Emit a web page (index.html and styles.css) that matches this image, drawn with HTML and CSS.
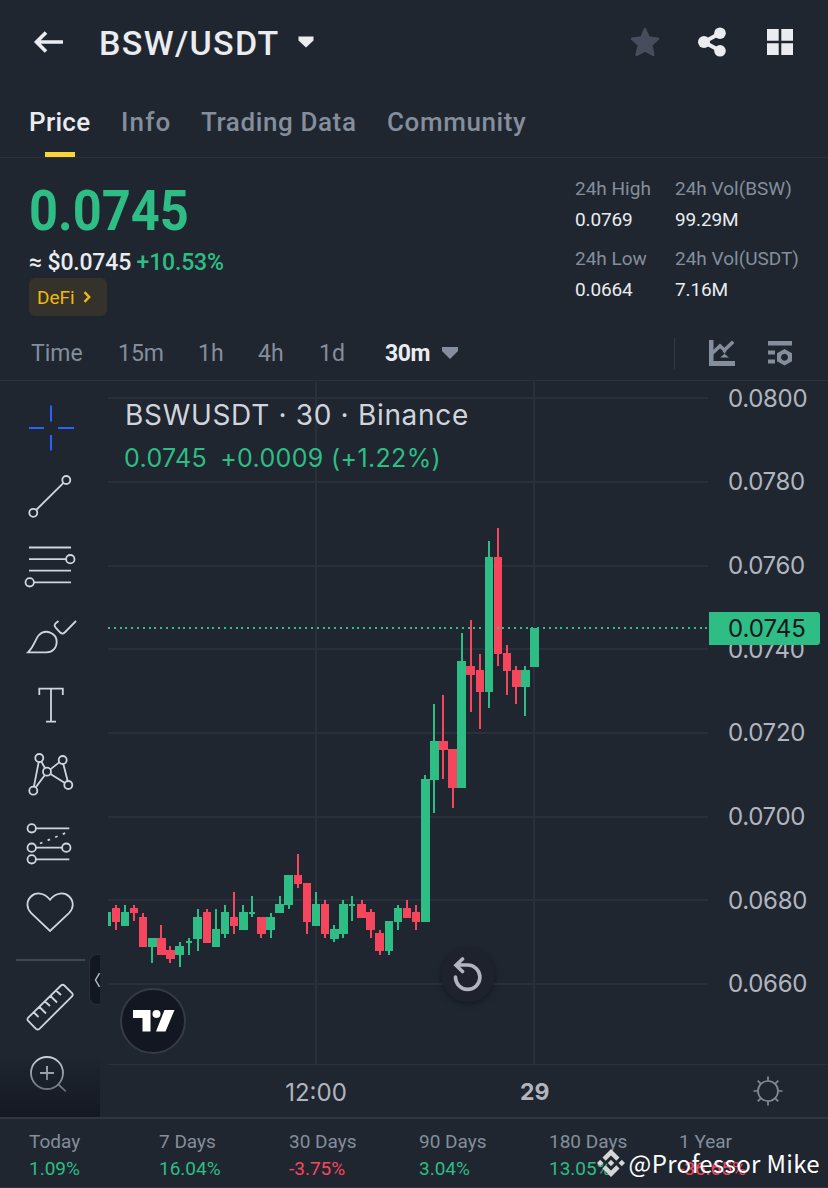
FILE: index.html
```
<!DOCTYPE html>
<html lang="en">
<head>
    <meta charset="UTF-8">
    <meta name="viewport" content="width=device-width, initial-scale=1.0">
    <title>BSW/USDT</title>
    <link rel="stylesheet" href="styles.css">
</head>
<body>
    <div class="app">
        <header class="header">
            <svg class="back" width="30" height="24" viewBox="0 0 30 24"><path d="M30 12H4M13 2.500L3.500 12l9.500 9.500" fill="none" stroke="#eaecef" stroke-width="3.600"/></svg>
            <h1>BSW/USDT</h1>
            <svg class="caret" width="16" height="12" viewBox="0 0 16 12"><path d="M.5.5h15v4L8 11.5.5 4.500z" fill="#eaecef"/></svg>
            <div class="header-icons">
                <svg width="30" height="30" viewBox="0 0 30 30"><path d="M15 2.200l3.600 8.300 9.400 1.300-6.900 6.200 2.300 9.800-8.400-4.500-8.400 4.500 2.300-9.800L2 11.800l9.400-1.300z" fill="#474d5c" stroke="#474d5c" stroke-width="2.500" stroke-linejoin="round"/></svg>
                <svg width="30" height="30" viewBox="0 0 30 30"><g fill="#eaecef"><circle cx="7" cy="15" r="6"/><circle cx="23" cy="6.200" r="5.800"/><circle cx="23" cy="23.800" r="5.800"/></g><path d="M23 6.200L7 15l16 8.800" fill="none" stroke="#eaecef" stroke-width="4"/></svg>
                <svg width="26" height="26" viewBox="0 0 26 26"><path d="M0 0h11.700v11.700H0zM14.300 0H26v11.700H14.300zM0 14.300h11.700V26H0zM14.300 14.300H26V26H14.300z" fill="#eaecef"/></svg>
            </div>
        </header>

        <nav class="tabs">
            <a class="tab active">Price</a>
            <a class="tab info">Info</a>
            <a class="tab data">Trading Data</a>
            <a class="tab community">Community</a>
        </nav>

        <section class="summary">
            <div class="price-block">
                <div class="price">0.0745</div>
                <div class="fiat">≈ $0.0745 <span class="up">+10.53%</span></div>
                <div class="tag">DeFi <svg width="8" height="12" viewBox="0 0 8 12"><path d="M1.500 1.200L6.200 6l-4.700 4.800" fill="none" stroke="#f0b90b" stroke-width="2.400"/></svg></div>
            </div>
            <div class="stats">
                <div class="stat"><span class="label high">24h High</span><span class="value">0.0769</span></div>
                <div class="stat"><span class="label">24h Vol(BSW)</span><span class="value">99.29M</span></div>
                <div class="stat"><span class="label">24h Low</span><span class="value">0.0664</span></div>
                <div class="stat"><span class="label">24h Vol(USDT)</span><span class="value">7.16M</span></div>
            </div>
        </section>

        <div class="intervals">
            <span class="interval i-time">Time</span>
            <span class="interval i-15m">15m</span>
            <span class="interval i-1h">1h</span>
            <span class="interval i-4h">4h</span>
            <span class="interval i-1d">1d</span>
            <span class="interval i-30m active">30m</span>
            <svg class="interval-caret" width="16" height="12" viewBox="0 0 16 12"><path d="M0 0h16v4l-8 8-8-8z" fill="#848e9c"/></svg>
            <div class="interval-tools">
                <svg width="26" height="26" viewBox="0 0 26 26"><path d="M0 0h4.500v21H26v5H0z" fill="#848e9c"/><path d="M3 13.500l8-7.500 4.500 4L24.200 1.700" fill="none" stroke="#848e9c" stroke-width="3.600"/><path d="M11.200 17.500l4.300-3.700 4.300 3.700zM13.500 11h4l-2 2.800z" fill="#848e9c"/></svg>
                <svg width="26" height="26" viewBox="0 0 26 26"><path d="M1 1h24v4.500H1zM1 10.500h7v4H1zM1 19.500h7v4H1z" fill="#848e9c"/><path fill-rule="evenodd" d="M17.500 9l7.500 4.200v8L17.500 25.500 10 21.200v-8zM17.500 13.700a3.500 3.500 0 1 0 .01 0z" fill="#848e9c"/></svg>
            </div>
        </div>

        <main class="chart">
            <aside class="toolbar">
                <svg class="tool cross" viewBox="0 0 56 56"><path d="M7 28h15M36 28h16M29 5.500v16M29 35v15.500"/></svg>
                <svg class="tool" viewBox="0 0 56 56"><circle cx="11.300" cy="43.800" r="4"/><circle cx="44.300" cy="11" r="4"/><path d="M14.200 41L41.500 13.800"/></svg>
                <svg class="tool" viewBox="0 0 56 56"><path d="M7 9.500h42M7 21.200h37M7 32.700h42M12 44.300h37"/><circle cx="48.300" cy="21.200" r="4.200"/><circle cx="7.700" cy="44.300" r="4.200"/></svg>
                <svg class="tool" viewBox="0 0 56 56"><path d="M6 44.300C12 38.500 13 32 16.500 27.500c7-7.500 18.200-2.500 18.200 6.500 0 6-4.200 10.300-10 10.300zM36.500 13l-2.500 2c-1.800 1.500-1.800 3-.3 4.700l4.500 4.800c1.500 1.500 3 1.500 4.500 0L54 13"/></svg>
                <svg class="tool" viewBox="0 0 56 56"><path d="M17.300 18v-6.300h23.500V18M29 11.700v33M24 44.700h10"/></svg>
                <svg class="tool" viewBox="0 0 56 56"><circle cx="17.300" cy="12" r="4"/><circle cx="40.700" cy="14" r="4"/><circle cx="25" cy="25.700" r="4"/><circle cx="11.300" cy="44.700" r="4"/><circle cx="46.300" cy="39" r="4"/><path d="M16.700 16l-4.800 24.700M19.300 15.500l3.700 6.700M28.300 23.400l9-7M41.300 18l4.400 17M28.500 27.900l14.400 9M22.700 29.200l-9 12.200"/></svg>
                <svg class="tool" viewBox="0 0 56 56"><circle cx="9.700" cy="13.300" r="4.200"/><circle cx="9.700" cy="32.700" r="4.200"/><circle cx="44.300" cy="32.700" r="4.200"/><circle cx="9.700" cy="44.300" r="4.200"/><path d="M14 13.300h33.300M14 32.700h26M14 44.300h33.300"/><path d="M18 28.500l28-11.500" stroke-dasharray="2.600 5.600"/></svg>
                <svg class="tool" viewBox="0 0 56 56"><path d="M28 15.700C22 8 13.500 8 9 12.500c-5 5-4.500 11.800 0 16.300L28 47l19.200-18.200c4.500-4.500 5-11.300 0-16.300C42.500 8 34 8 28 15.700z"/></svg>
                <div class="toolbar-line"></div>
                <svg class="tool ruler" viewBox="0 0 56 56"><path d="M39 6.500q1.700-1.500 3.400 0l7.600 7.600q1.500 1.700 0 3.400L17.400 49.800q-1.700 1.500-3.400 0L6.200 42q-1.500-1.700 0-3.400zM34 11.500l5 4.500M28.500 17l6.500 6.500M23 22.500l5 4.500M17.500 28l6.500 6.500M12 33.500l4.500 4.500"/></svg>
                <svg class="tool zoom" viewBox="0 0 56 56"><circle cx="25" cy="27" r="16"/><path d="M25 20v14M18 27h14M36.300 38.300l7.500 7"/></svg>
                <div class="toolbar-fade"></div>
                <div class="toolbar-toggle"><svg width="6" height="16" viewBox="0 0 6 16"><path d="M5.500 1L1.500 8l4 7" fill="none" stroke="#b2b5be" stroke-width="1.500"/></svg></div>
            </aside>

            <div class="plot">
                <svg class="candles" id="candles" width="601" height="682" viewBox="108 382 601 682" shape-rendering="crispEdges"></svg>
                <div class="legend">
                    <div class="legend-title">BSWUSDT · 30 · Binance</div>
                    <div class="legend-values"><span>0.0745</span><span class="legend-change">+0.0009 (+1.22%)</span></div>
                </div>
                <div class="reset"><svg width="32" height="36" viewBox="0 0 32 36"><path d="M4.500 20A12.200 12.200 0 1 0 16.800 8H6M11.500 2L5 8.200l6.500 6.300" fill="none" stroke="#b2b5be" stroke-width="3.600" stroke-linecap="round"/></svg></div>
                <div class="tv-logo"><svg width="42" height="22" viewBox="0 0 42 22"><path d="M0 0h17.500v21.500H9.500V8H0zM31.500 0H41.500l-9 21.500H23z" fill="#fff"/><circle cx="23.500" cy="4" r="4" fill="#fff"/></svg></div>
            </div>

            <div class="price-axis">
                <span>0.0800</span>
                <span>0.0780</span>
                <span>0.0760</span>
                <span>0.0740</span>
                <span>0.0720</span>
                <span>0.0700</span>
                <span>0.0680</span>
                <span>0.0660</span>
                <div class="last-price">0.0745</div>
            </div>

            <div class="time-axis">
                <span class="t-noon">12:00</span>
                <span class="t-day">29</span>
                <svg class="gear" width="30" height="30" viewBox="0 0 30 30"><g fill="none" stroke="#868993" stroke-width="1.700"><circle cx="15" cy="15" r="10"/><path d="M15 5V.5M15 25v4.500M5 15H.5M25 15h4.500M7.900 7.900L4.700 4.700M22.100 22.100l3.200 3.200M7.900 22.100l-3.200 3.200M22.100 7.900l3.200-3.200"/></g></svg>
            </div>
        </main>

        <footer class="performance">
            <div class="period"><span class="label">Today</span><span class="up">1.09%</span></div>
            <div class="period"><span class="label">7 Days</span><span class="up">16.04%</span></div>
            <div class="period"><span class="label">30 Days</span><span class="down">-3.75%</span></div>
            <div class="period"><span class="label">90 Days</span><span class="up">3.04%</span></div>
            <div class="period"><span class="label">180 Days</span><span class="up">13.05%</span></div>
            <div class="period"><span class="label">1 Year</span><span class="down">-36.65%</span></div>
            <div class="credit">
                <svg width="28" height="28" viewBox="0 0 28 28"><path d="M14 0l8.500 8.500-3.200 3.200L14 6.400l-5.300 5.300-3.200-3.200zM14 28l8.500-8.500-3.200-3.200-5.300 5.300-5.300-5.300-3.200 3.200zM14 10.800l3.200 3.200-3.200 3.200-3.200-3.200zM3.200 10.800L6.400 14l-3.200 3.200L0 14zM24.800 10.800L28 14l-3.200 3.200-3.200-3.200z" fill="#d5d6d8"/></svg>
                <span>@Professor Mike</span>
            </div>
        </footer>
    </div>

    <script src="chart.js"></script>
</body>
</html>
```
FILE: styles.css
```
* {
    box-sizing: border-box;
}
body {
    margin: 0;
    background-color: #1f2630;
    color: #eaecef;
    font-family: Roboto, sans-serif;
}
.app {
    width: 828px;
    height: 1188px;
    display: flex;
    flex-direction: column;
    overflow: hidden;
}
svg {
    display: block;
    flex-shrink: 0;
}
.up {
    color: #2ebd85;
}
.down {
    color: #f6465d;
}

/* header */
.header {
    height: 84px;
    display: flex;
    align-items: center;
    padding: 0 35px 0 33px;
}
.header h1 {
    margin: 2px 0 0 36px;
    width: 199px;
    font-size: 34px;
    font-weight: 500;
    letter-spacing: 1.3px;
    white-space: nowrap;
}
.header-icons {
    display: flex;
    align-items: center;
    gap: 38px;
    margin-left: auto;
}
.header-icons svg:first-child {
    margin-right: -1px;
}
.header-icons svg:nth-child(2) {
    margin-right: 2px;
}

/* tabs */
.tabs {
    height: 74px;
    display: flex;
    padding: 0 29px;
    border-bottom: 1px solid #2b313a;
}
.tab {
    position: relative;
    padding-top: 21px;
    font-size: 26px;
    line-height: 34px;
    font-weight: 500;
    letter-spacing: .6px;
    color: #848e9c;
    white-space: nowrap;
}
.tab.active {
    width: 92px;
    letter-spacing: .3px;
    color: #eaecef;
}
.tab.active::after {
    content: "";
    position: absolute;
    left: 16px;
    bottom: 0;
    width: 30px;
    height: 5px;
    background-color: #fcd535;
}
.tab.info {
    width: 80px;
    letter-spacing: 1.2px;
}
.tab.data {
    width: 186px;
}

/* price summary */
.summary {
    height: 168px;
    display: flex;
    justify-content: space-between;
    padding: 16px 30px 0 29px;
}
.price {
    width: 180px;
    font-size: 55px;
    line-height: 74px;
    font-weight: 700;
    color: #2ebd85;
    transform: scaleX(.92);
    transform-origin: left;
}
.fiat {
    font-size: 23px;
    line-height: 30px;
    font-weight: 500;
    letter-spacing: -.18px;
    white-space: nowrap;
}
.tag {
    display: flex;
    align-items: center;
    gap: 8px;
    width: 78px;
    height: 38px;
    padding-left: 8px;
    border-radius: 6px;
    background-color: #35322b;
    color: #f0b90b;
    font-size: 19px;
}
.stats {
    display: grid;
    grid-template-columns: 100px 124px;
    grid-auto-rows: 69.5px;
    margin-top: -1px;
}
.stat {
    display: flex;
    flex-direction: column;
    padding-left: 1px;
    font-size: 19px;
    line-height: 31px;
    white-space: nowrap;
}
.stat .value {
    letter-spacing: -.15px;
}
.label {
    color: #848e9c;
}

/* interval row */
.intervals {
    height: 55px;
    display: flex;
    align-items: center;
    padding: 0 35px 0 31px;
    border-bottom: 1px solid #2b313a;
}
.interval {
    padding-top: 2px;
    font-size: 23px;
    line-height: 30px;
    color: #848e9c;
}
.i-time {
    width: 87px;
}
.i-15m {
    width: 80px;
}
.i-1h {
    width: 60px;
}
.i-4h {
    width: 61px;
}
.i-1d {
    width: 66px;
}
.i-30m {
    width: 57px;
    letter-spacing: -.5px;
}
.interval.active {
    font-weight: 700;
    color: #eaecef;
}
.interval-tools {
    display: flex;
    align-items: center;
    gap: 32px;
    height: 31px;
    margin-left: auto;
    padding-left: 34px;
    border-left: 1px solid #333a44;
}

/* chart */
.chart {
    height: 736px;
    display: grid;
    grid-template-columns: 108px 601px 119px;
    grid-template-rows: 683px 53px;
    font-family: Inter, sans-serif;
    color: #b2b5be;
}
.toolbar {
    grid-row: 1 / 3;
    position: relative;
    width: 100px;
    display: flex;
    flex-direction: column;
    align-items: center;
    padding-top: 19px;
}
.tool {
    width: 56px;
    height: 56px;
    margin-bottom: 13.2px;
    fill: none;
    stroke: #d1d4dc;
    stroke-width: 1.8;
}
.tool.cross {
    stroke: #2962ff;
    stroke-width: 2;
}
.toolbar-line {
    width: 69px;
    height: 2px;
    margin-top: 5px;
    background-color: #3f4551;
}
.tool.ruler {
    margin-top: 18px;
    margin-bottom: 11.5px;
}
.toolbar-fade {
    position: absolute;
    left: 0;
    bottom: 0;
    width: 100px;
    height: 62px;
    background: linear-gradient(rgba(19, 23, 34, 0), rgba(19, 23, 34, .95));
}
.toolbar-toggle {
    position: absolute;
    right: 0;
    top: 573px;
    width: 11px;
    height: 51px;
    display: flex;
    align-items: center;
    justify-content: flex-end;
    border: 1px solid #2a2e39;
    border-right: 0;
    border-radius: 8px 0 0 8px;
    background-color: #131722;
}
.plot {
    position: relative;
    padding-top: 1px;
}
.legend {
    position: absolute;
    left: 16px;
    top: 16px;
    white-space: nowrap;
}
.legend-title {
    padding-left: 1px;
    font-size: 28px;
    line-height: 36px;
    letter-spacing: .68px;
    color: #d1d4dc;
}
.legend-values {
    display: flex;
    gap: 13px;
    margin-top: 9px;
    font-size: 25px;
    line-height: 32px;
    letter-spacing: .35px;
    color: #2ebd85;
}
.reset {
    position: absolute;
    left: 333px;
    top: 567px;
    width: 54px;
    height: 54px;
    display: flex;
    align-items: center;
    justify-content: center;
    padding-right: 2px;
    border-radius: 50%;
    background-color: #1e222d;
    box-shadow: 0 2px 6px rgba(0, 0, 0, .35);
}
.tv-logo {
    position: absolute;
    left: 12px;
    top: 607px;
    width: 66px;
    height: 66px;
    display: flex;
    align-items: center;
    justify-content: center;
    padding-left: 1px;
    border: 2px solid #363a45;
    border-radius: 50%;
    background-color: #131722;
}
.price-axis {
    position: relative;
    display: flex;
    flex-direction: column;
    padding-left: 19px;
    margin-top: -24.5px;
    font-size: 24px;
    line-height: 83.68px;
    letter-spacing: -.3px;
}
.last-price {
    position: absolute;
    left: 0;
    top: 255.5px;
    width: 111px;
    height: 33px;
    padding-left: 19px;
    border-radius: 0 3px 3px 0;
    background-color: #2ebd85;
    color: #131722;
    line-height: 33px;
    letter-spacing: 0;
}
.time-axis {
    grid-column: 2 / 4;
    display: flex;
    align-items: center;
    border-top: 1px solid #2b303a;
    font-size: 24px;
}
.t-noon {
    width: 412px;
    padding: 2px 0 0 4px;
    text-align: center;
}
.t-day {
    width: 28px;
    padding-top: 2px;
    font-size: 23px;
    text-align: center;
    font-weight: 700;
}
.gear {
    margin-left: 205px;
    margin-top: -1px;
}

/* performance */
.performance {
    position: relative;
    height: 71px;
    display: grid;
    grid-template-columns: repeat(6, 130px);
    padding: 9px 0 0 29px;
    border-top: 2px solid #303640;
    border-bottom: 1px solid #303640;
}
.period {
    display: flex;
    flex-direction: column;
    font-size: 19px;
    line-height: 27px;
    white-space: nowrap;
}
.credit {
    position: absolute;
    right: 8px;
    top: 25px;
    display: flex;
    align-items: center;
    gap: 4px;
    color: #fff;
    font: 400 24px/38px "Noto Sans CJK SC", sans-serif;
    letter-spacing: .35px;
    white-space: nowrap;
}
```
FILE: chart.js
```
// open, high, low, close in ticks of 0.0001
const candles = [
    [674, 677, 674, 677], [678, 679, 673, 675], [674, 679, 674, 677], [678, 679, 675, 677],
    [676, 677, 669, 669], [669, 671, 665, 671], [671, 674, 667, 667], [668, 669, 665, 666],
    [667, 670, 664, 669], [670, 671, 667, 670], [671, 678, 668, 676], [677, 678, 670, 670],
    [669, 678, 669, 673], [672, 679, 671, 677], [676, 682, 672, 674], [673, 679, 673, 677],
    [677, 681, 676, 677], [676, 676, 671, 672], [673, 677, 671, 676], [677, 681, 677, 679],
    [679, 686, 678, 686], [686, 691, 683, 684], [684, 684, 672, 675], [674, 682, 674, 679],
    [679, 680, 671, 672], [671, 674, 670, 673], [672, 680, 671, 679], [679, 681, 675, 679],
    [679, 680, 676, 676], [677, 678, 671, 673], [672, 673, 667, 668], [668, 675, 667, 675],
    [675, 679, 673, 678], [678, 680, 676, 676], [677, 679, 673, 675], [675, 710, 675, 709],
    [709, 727, 701, 718], [718, 729, 709, 716], [716, 716, 702, 707], [707, 744, 707, 737],
    [736, 747, 725, 734], [735, 739, 721, 730], [730, 766, 726, 762], [762, 769, 736, 739],
    [739, 741, 729, 735], [735, 736, 727, 731], [731, 736, 724, 735], [736, 745, 736, 745]
];
const svg = document.getElementById('candles');
const step = 9.1;
const firstX = 106.7;

function priceY(tick) {
    return 398.3 + (800 - tick) * 4.184;
}

function add(name, attrs) {
    const el = document.createElementNS('http://www.w3.org/2000/svg', name);
    for (const key in attrs) {
        el.setAttribute(key, attrs[key]);
    }
    svg.appendChild(el);
}

// grid
for (let tick = 660; tick <= 800; tick += 20) {
    add('rect', { x: 108, y: priceY(tick) - 1, width: 600, height: 2, fill: '#2a303a' });
}
for (const x of [315, 533]) {
    add('rect', { x: x, y: 382, width: 2, height: 682, fill: '#2a303a' });
}

// candles
candles.forEach(([open, high, low, close], i) => {
    const x = firstX + i * step;
    const color = close >= open ? '#2ebd85' : '#f6465d';
    const top = priceY(Math.max(open, close));
    const bottom = priceY(Math.min(open, close));
    add('rect', { x: x - 1, y: priceY(high), width: 2, height: priceY(low) - priceY(high), fill: color });
    if (open === close) {
        add('rect', { x: x - 3, y: top - 1, width: 6, height: 2, fill: color });
    } else {
        add('rect', { x: x - 4.3, y: top - 0.5, width: 8.6, height: bottom - top + 1, fill: color });
    }
});

// last price
add('line', { x1: 108, y1: 628, x2: 708, y2: 628, stroke: '#2ebd85', 'stroke-width': 2, 'stroke-dasharray': '2 3.8' });
```
